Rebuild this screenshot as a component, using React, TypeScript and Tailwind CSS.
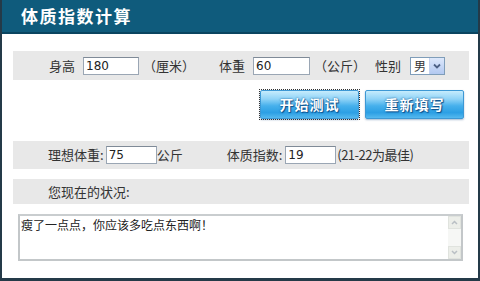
import React from "react";

const font = { fontFamily: '"Noto Sans CJK SC", "Noto Sans", sans-serif' };

function Input({ value, w }: { value: string; w: string }) {
  return (
    <div
      className={`${w} h-[18px] bg-white border border-[#9aa6b4] border-t-[#7f8a97] flex items-center pl-[2px] text-[12px] text-[#222] leading-none`}
      style={{ fontFamily: '"DejaVu Sans", "Liberation Sans", sans-serif' }}
    >
      {value}
    </div>
  );
}

function Btn({ label, focus }: { label: string; focus?: boolean }) {
  return (
    <div className={`w-[101px] h-[31px] p-[1px] ${focus ? "outline outline-1 outline-dotted outline-[#333] -outline-offset-1" : ""}`}>
      <div
        className="w-full h-full rounded-[2px] border border-[#3d98d4] flex items-center justify-center text-white font-bold text-[14px] tracking-[1px] shadow-[0_1px_2px_rgba(0,60,120,0.35)]"
        style={{
          background: "linear-gradient(#c6ecfd 0%, #8fd3f7 30%, #46b0ec 55%, #2c9fe4 80%, #55b9ef 100%)",
          textShadow: "0 0 2px #0b4f8a, 1px 1px 1px #0b4f8a",
          ...font,
        }}
      >
        {label}
      </div>
    </div>
  );
}

export default function App() {
  return (
    <div className="w-[480px] h-[281px] bg-white flex flex-col border-l-2 border-r-2 border-b-[3px] border-[#243a48] text-[#333] text-[13px]" style={font}>
      <div className="h-[34px] shrink-0 bg-[#0f5b7c] border-b-2 border-[#0a4560] flex items-center pl-[19px]">
        <span className="text-white text-[17px] font-bold tracking-[1.5px]">体质指数计算</span>
      </div>
      <div className="flex flex-col px-[11px] pt-[17px]">
        <div className="h-[29px] w-[456px] bg-[#e8e8e8] flex items-center pl-[36px]">
          <span>身高</span>
          <div className="ml-[8px]"><Input value="180" w="w-[56px]" /></div>
          <span className="ml-[4px] w-[47px]">（厘米）</span>
          <span className="ml-[29px]">体重</span>
          <div className="ml-[8px]"><Input value="60" w="w-[57px]" /></div>
          <span className="ml-[4px] w-[55px]">（公斤）</span>
          <span className="ml-[6px]">性别</span>
          <div className="ml-[9px] w-[35px] h-[18px] bg-white border border-[#7f9db9] flex items-center">
            <span className="flex-1 pl-[3px] text-[12px] leading-none">男</span>
            <div className="w-[15px] h-[16px] bg-gradient-to-b from-[#dde8fb] to-[#b3c9f1] border-l border-[#c4d2ee] flex items-center justify-center">
              <svg width="8" height="6" viewBox="0 0 8 6">
                <path d="M1 1.5 L4 4.5 L7 1.5" fill="none" stroke="#4d6185" strokeWidth="1.8" />
              </svg>
            </div>
          </div>
        </div>
        <div className="flex justify-end gap-[4px] mt-[9px] w-[452px]">
          <Btn label="开始测试" focus />
          <Btn label="重新填写" />
        </div>
        <div className="h-[28px] w-[456px] bg-[#e8e8e8] flex items-center pl-[35px] mt-[21px]">
          <span>理想体重:</span>
          <div className="ml-[2px]"><Input value="75" w="w-[51px]" /></div>
          <span>公斤</span>
          <span className="ml-[44px]">体质指数:</span>
          <div className="ml-[3px]"><Input value="19" w="w-[51px]" /></div>
          <span className="ml-[1px] tracking-[-0.5px]">(21-22为最佳)</span>
        </div>
        <div className="h-[25px] w-[456px] bg-[#e8e8e8] flex items-center pl-[35px] mt-[10px]">
          <span>您现在的状况:</span>
        </div>
        <div className="mt-[10px] ml-[5px] w-[445px] h-[47px] border-2 border-[#c3c7c9] border-t-[#c9cdcf] bg-white flex">
          <div className="flex-1 text-[12px] leading-[15px] pl-[1px] pt-[1px] text-[#222]">瘦了一点点，你应该多吃点东西啊！</div>
          <div className="w-[13px] flex flex-col bg-[#f6f7f5]">
            <div className="h-[13px] bg-[#eceee9] border border-[#e0e3de] flex items-center justify-center">
              <svg width="7" height="5" viewBox="0 0 7 5"><path d="M1 4 L3.5 1.5 L6 4" fill="none" stroke="#b9bfc4" strokeWidth="1.5" /></svg>
            </div>
            <div className="flex-1" />
            <div className="h-[13px] bg-[#eceee9] border border-[#e0e3de] flex items-center justify-center">
              <svg width="7" height="5" viewBox="0 0 7 5"><path d="M1 1 L3.5 3.5 L6 1" fill="none" stroke="#b9bfc4" strokeWidth="1.5" /></svg>
            </div>
          </div>
        </div>
      </div>
    </div>
  );
}
